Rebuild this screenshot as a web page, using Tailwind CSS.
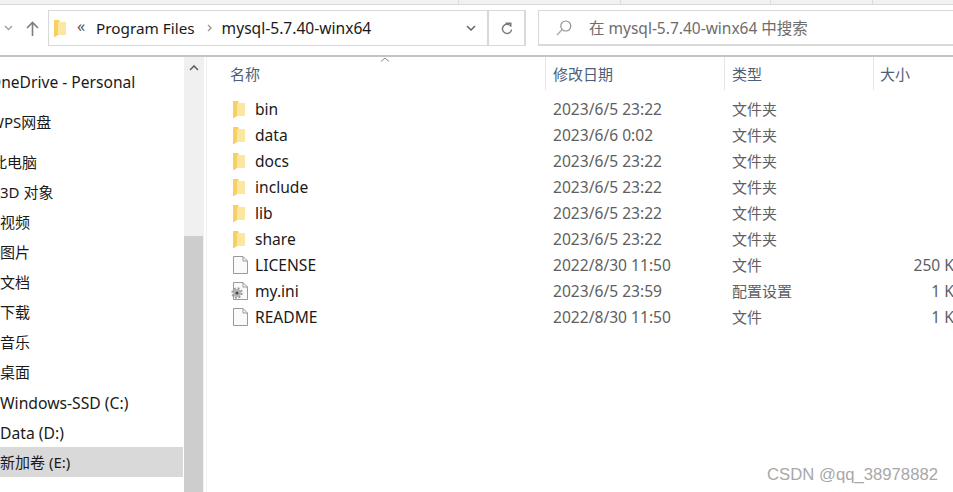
<!DOCTYPE html>
<html lang="zh">
<head>
    <meta charset="UTF-8">
    <title>mysql-5.7.40-winx64</title>
    <script src="https://cdn.jsdelivr.net/npm/@tailwindcss/browser@4"></script>
</head>
<body class="bg-white">
    <div class="relative w-[953px] h-[492px] overflow-hidden flex flex-col bg-white text-[15.6px] text-[#1a1a1a] font-['Noto_Sans','Noto_Sans_CJK_SC',sans-serif]">
        <!-- tab strip -->
        <div class="h-[5px] shrink-0 flex bg-[#f1f2f4] border-b border-[#d9d9d9]">
            <div class="w-[459px] border-r border-[#dcdcdc]"></div>
            <div class="w-[162px] border-r border-[#dcdcdc]"></div>
            <div class="w-[150px] border-r border-[#dcdcdc]"></div>
            <div class="w-[102px] border-r border-[#dcdcdc]"></div>
        </div>

        <!-- toolbar -->
        <div class="h-[52px] shrink-0 flex items-start pt-[5px] border-b-2 border-[#c4c4c4]">
            <div class="w-[48px] h-[36px] shrink-0 flex items-center">
                <svg class="ml-[4px]" width="9" height="6" viewBox="0 0 9 6"><path d="M1 1l3.500 3.500L8 1" fill="none" stroke="#a0a0a0" stroke-width="1.500"/></svg>
                <svg class="ml-[13px]" width="13" height="15" viewBox="0 0 13 15"><path d="M6.500 15V1.500M1 7l5.500-5.500L12 7" fill="none" stroke="#7d7d7d" stroke-width="1.600"/></svg>
            </div>
            <div class="w-[478px] h-[36px] shrink-0 flex items-center border border-[#d9d9d9] border-r-2">
                <svg class="ml-[5px]" width="12" height="17" viewBox="0 0 12 17"><path d="M0 0h5l1 2h6v13H4l-3 2H0z" fill="#f6cf65"/><path d="M4 2h8v13H4z" fill="#fbe6a2"/></svg>
                <span class="ml-[11px] w-[11px] text-[16px] leading-none -mt-[5px] text-[#555]">«</span>
                <span class="ml-[8px] text-[15.3px]">Program Files</span>
                <svg class="ml-[12px]" width="5" height="8" viewBox="0 0 5 8"><path d="M1 1l3 3-3 3" fill="none" stroke="#9a9a9a" stroke-width="1.400"/></svg>
                <span class="ml-[10px] pt-[2px]">mysql-5.7.40-winx64</span>
                <svg class="ml-auto mr-[11px]" width="10" height="6" viewBox="0 0 10 6"><path d="M1 1l4 4 4-4" fill="none" stroke="#666" stroke-width="1.500"/></svg>
                <div class="w-[37px] h-[34px] shrink-0 flex items-center justify-center border-l-2 border-[#d9d9d9]">
                    <svg width="12" height="13" viewBox="0 0 12 13"><path d="M9.800 4.200A4.600 4.600 0 1 0 10.600 7.500M4.500 1.200L9.800 1.200V4.800" fill="none" stroke="#777" stroke-width="1.400"/></svg>
                </div>
            </div>
            <div class="ml-[12px] flex-1 h-[36px] flex items-center border-y border-l border-[#d9d9d9] border-b-2 text-[#6d6d6d]">
                <svg class="ml-[17px]" width="16" height="16" viewBox="0 0 16 16"><circle cx="9.800" cy="6" r="5" fill="none" stroke="#8a8a8a" stroke-width="1.100"/><path d="M6 9.800L1 15" stroke="#a8a8a8" stroke-width="1.300"/></svg>
                <span class="ml-[17px] pt-[2px] text-[15.5px]">在 mysql-5.7.40-winx64 中搜索</span>
            </div>
        </div>

        <div class="flex-1 flex min-h-0">
            <!-- nav pane -->
            <div class="w-[184px] shrink-0 overflow-hidden pt-[10px] whitespace-nowrap text-[15px]">
                <div class="h-[30px] flex items-center -ml-[11px] pt-[2px] text-[15.6px]">OneDrive - Personal</div>
                <div class="h-[10px]"></div>
                <div class="h-[30px] flex items-center -ml-[10px]">WPS网盘</div>
                <div class="h-[10px]"></div>
                <div class="h-[30px] flex items-center -ml-[8px]">此电脑</div>
                <div class="h-[30px] flex items-center">3D 对象</div>
                <div class="h-[30px] flex items-center">视频</div>
                <div class="h-[30px] flex items-center">图片</div>
                <div class="h-[30px] flex items-center">文档</div>
                <div class="h-[30px] flex items-center">下载</div>
                <div class="h-[30px] flex items-center">音乐</div>
                <div class="h-[30px] flex items-center">桌面</div>
                <div class="h-[30px] flex items-center pt-[4px] text-[15.7px]">Windows-SSD (C:)</div>
                <div class="h-[30px] flex items-center pt-[4px] text-[15.7px]">Data (D:)</div>
                <div class="h-[30px] flex items-center bg-[#d9d9d9] w-[183px]">新加卷 (E:)</div>
            </div>

            <!-- scrollbar -->
            <div class="w-[20px] shrink-0 pr-px bg-[#f0f0f0] flex flex-col justify-between">
                <div class="h-[179px] pt-[8px] flex justify-center">
                    <svg width="10" height="6" viewBox="0 0 10 6"><path d="M1 5l4-4 4 4" fill="none" stroke="#606060" stroke-width="1.600"/></svg>
                </div>
                <div class="flex-1 bg-[#cdcdcd]"></div>
            </div>

            <!-- file list -->
            <div class="relative flex-1 ml-[2px] border-l border-[#f0f0f0] min-w-0">
                <svg class="absolute left-[173px] top-0" width="10" height="5" viewBox="0 0 10 5"><path d="M1 4.500L5 1l4 3.500" fill="none" stroke="#8a8a8a"/></svg>
                <div class="h-[33px] flex text-[15px] text-[#4c607a]">
                    <div class="w-[339px] pl-[23px] pt-[6px] border-r border-[#e5e5e5]">名称</div>
                    <div class="w-[179px] pl-[7px] pt-[6px] border-r border-[#e5e5e5]">修改日期</div>
                    <div class="w-[149px] pl-[7px] pt-[6px] border-r border-[#e5e5e5]">类型</div>
                    <div class="pl-[6px] pt-[6px]">大小</div>
                </div>
                <div class="pt-[6px] whitespace-nowrap">
                    <div class="h-[26px] flex items-center">
                        <div class="w-[29px] ml-[26px] shrink-0"><svg width="12" height="17" viewBox="0 0 12 17"><path d="M0 0h5l1 2h6v13H4l-3 2H0z" fill="#f6cf65"/><path d="M4 2h8v13H4z" fill="#fbe6a2"/></svg></div>
                        <div class="w-[298px] shrink-0 -ml-[7px] pt-[2px]">bin</div>
                        <div class="w-[179px] shrink-0 pt-[2px] text-[#5f5f5f]">2023/6/5 23:22</div>
                        <div class="w-[149px] shrink-0 text-[15px] text-[#5f5f5f]">文件夹</div>
                    </div>
                    <div class="h-[26px] flex items-center">
                        <div class="w-[29px] ml-[26px] shrink-0"><svg width="12" height="17" viewBox="0 0 12 17"><path d="M0 0h5l1 2h6v13H4l-3 2H0z" fill="#f6cf65"/><path d="M4 2h8v13H4z" fill="#fbe6a2"/></svg></div>
                        <div class="w-[298px] shrink-0 -ml-[7px] pt-[2px]">data</div>
                        <div class="w-[179px] shrink-0 pt-[2px] text-[#5f5f5f]">2023/6/6 0:02</div>
                        <div class="w-[149px] shrink-0 text-[15px] text-[#5f5f5f]">文件夹</div>
                    </div>
                    <div class="h-[26px] flex items-center">
                        <div class="w-[29px] ml-[26px] shrink-0"><svg width="12" height="17" viewBox="0 0 12 17"><path d="M0 0h5l1 2h6v13H4l-3 2H0z" fill="#f6cf65"/><path d="M4 2h8v13H4z" fill="#fbe6a2"/></svg></div>
                        <div class="w-[298px] shrink-0 -ml-[7px] pt-[2px]">docs</div>
                        <div class="w-[179px] shrink-0 pt-[2px] text-[#5f5f5f]">2023/6/5 23:22</div>
                        <div class="w-[149px] shrink-0 text-[15px] text-[#5f5f5f]">文件夹</div>
                    </div>
                    <div class="h-[26px] flex items-center">
                        <div class="w-[29px] ml-[26px] shrink-0"><svg width="12" height="17" viewBox="0 0 12 17"><path d="M0 0h5l1 2h6v13H4l-3 2H0z" fill="#f6cf65"/><path d="M4 2h8v13H4z" fill="#fbe6a2"/></svg></div>
                        <div class="w-[298px] shrink-0 -ml-[7px] pt-[2px]">include</div>
                        <div class="w-[179px] shrink-0 pt-[2px] text-[#5f5f5f]">2023/6/5 23:22</div>
                        <div class="w-[149px] shrink-0 text-[15px] text-[#5f5f5f]">文件夹</div>
                    </div>
                    <div class="h-[26px] flex items-center">
                        <div class="w-[29px] ml-[26px] shrink-0"><svg width="12" height="17" viewBox="0 0 12 17"><path d="M0 0h5l1 2h6v13H4l-3 2H0z" fill="#f6cf65"/><path d="M4 2h8v13H4z" fill="#fbe6a2"/></svg></div>
                        <div class="w-[298px] shrink-0 -ml-[7px] pt-[2px]">lib</div>
                        <div class="w-[179px] shrink-0 pt-[2px] text-[#5f5f5f]">2023/6/5 23:22</div>
                        <div class="w-[149px] shrink-0 text-[15px] text-[#5f5f5f]">文件夹</div>
                    </div>
                    <div class="h-[26px] flex items-center">
                        <div class="w-[29px] ml-[26px] shrink-0"><svg width="12" height="17" viewBox="0 0 12 17"><path d="M0 0h5l1 2h6v13H4l-3 2H0z" fill="#f6cf65"/><path d="M4 2h8v13H4z" fill="#fbe6a2"/></svg></div>
                        <div class="w-[298px] shrink-0 -ml-[7px] pt-[2px]">share</div>
                        <div class="w-[179px] shrink-0 pt-[2px] text-[#5f5f5f]">2023/6/5 23:22</div>
                        <div class="w-[149px] shrink-0 text-[15px] text-[#5f5f5f]">文件夹</div>
                    </div>
                    <div class="h-[26px] flex items-center">
                        <div class="w-[29px] ml-[26px] shrink-0"><svg width="15" height="18" viewBox="0 0 15 18"><path d="M.5.5h9.500l4.500 4.500v12.500H.5z" fill="#fafafa" stroke="#9a9a9a"/><path d="M10 .5v4.500h4.500" fill="none" stroke="#9a9a9a"/></svg></div>
                        <div class="w-[298px] shrink-0 -ml-[7px] pt-[2px]">LICENSE</div>
                        <div class="w-[179px] shrink-0 pt-[2px] text-[#5f5f5f]">2022/8/30 11:50</div>
                        <div class="w-[149px] shrink-0 text-[15px] text-[#5f5f5f]">文件</div>
                        <div class="w-[73px] shrink-0 pt-[2px] text-right text-[#5f5f5f]">250 K</div>
                    </div>
                    <div class="h-[26px] flex items-center">
                        <div class="w-[29px] ml-[26px] shrink-0 relative"><svg width="15" height="18" viewBox="0 0 15 18"><path d="M.5.5h9.500l4.500 4.500v12.500H.5z" fill="#fafafa" stroke="#9a9a9a"/><path d="M10 .5v4.500h4.500" fill="none" stroke="#9a9a9a"/></svg><svg class="absolute -left-[2px] top-[5px]" width="12" height="12" viewBox="0 0 12 12"><circle cx="6" cy="6" r="4" fill="#b5b5b5"/><circle cx="6" cy="6" r="4.800" fill="none" stroke="#9a9a9a" stroke-width="1.800" stroke-dasharray="2 1.770"/><circle cx="6" cy="6" r="1.600" fill="#4a4a4a"/></svg></div>
                        <div class="w-[298px] shrink-0 -ml-[7px] pt-[2px]">my.ini</div>
                        <div class="w-[179px] shrink-0 pt-[2px] text-[#5f5f5f]">2023/6/5 23:59</div>
                        <div class="w-[149px] shrink-0 text-[15px] text-[#5f5f5f]">配置设置</div>
                        <div class="w-[73px] shrink-0 pt-[2px] text-right text-[#5f5f5f]">1 K</div>
                    </div>
                    <div class="h-[26px] flex items-center">
                        <div class="w-[29px] ml-[26px] shrink-0"><svg width="15" height="18" viewBox="0 0 15 18"><path d="M.5.5h9.500l4.500 4.500v12.500H.5z" fill="#fafafa" stroke="#9a9a9a"/><path d="M10 .5v4.500h4.500" fill="none" stroke="#9a9a9a"/></svg></div>
                        <div class="w-[298px] shrink-0 -ml-[7px] pt-[2px]">README</div>
                        <div class="w-[179px] shrink-0 pt-[2px] text-[#5f5f5f]">2022/8/30 11:50</div>
                        <div class="w-[149px] shrink-0 text-[15px] text-[#5f5f5f]">文件</div>
                        <div class="w-[73px] shrink-0 pt-[2px] text-right text-[#5f5f5f]">1 K</div>
                    </div>
                </div>
            </div>
        </div>

        <!-- watermark -->
        <div class="absolute right-[15px] top-[466px] text-[16.7px] leading-[18px] text-[#a8a8a8] font-['Liberation_Sans',sans-serif]">CSDN @qq_38978882</div>
    </div>
</body>
</html>
